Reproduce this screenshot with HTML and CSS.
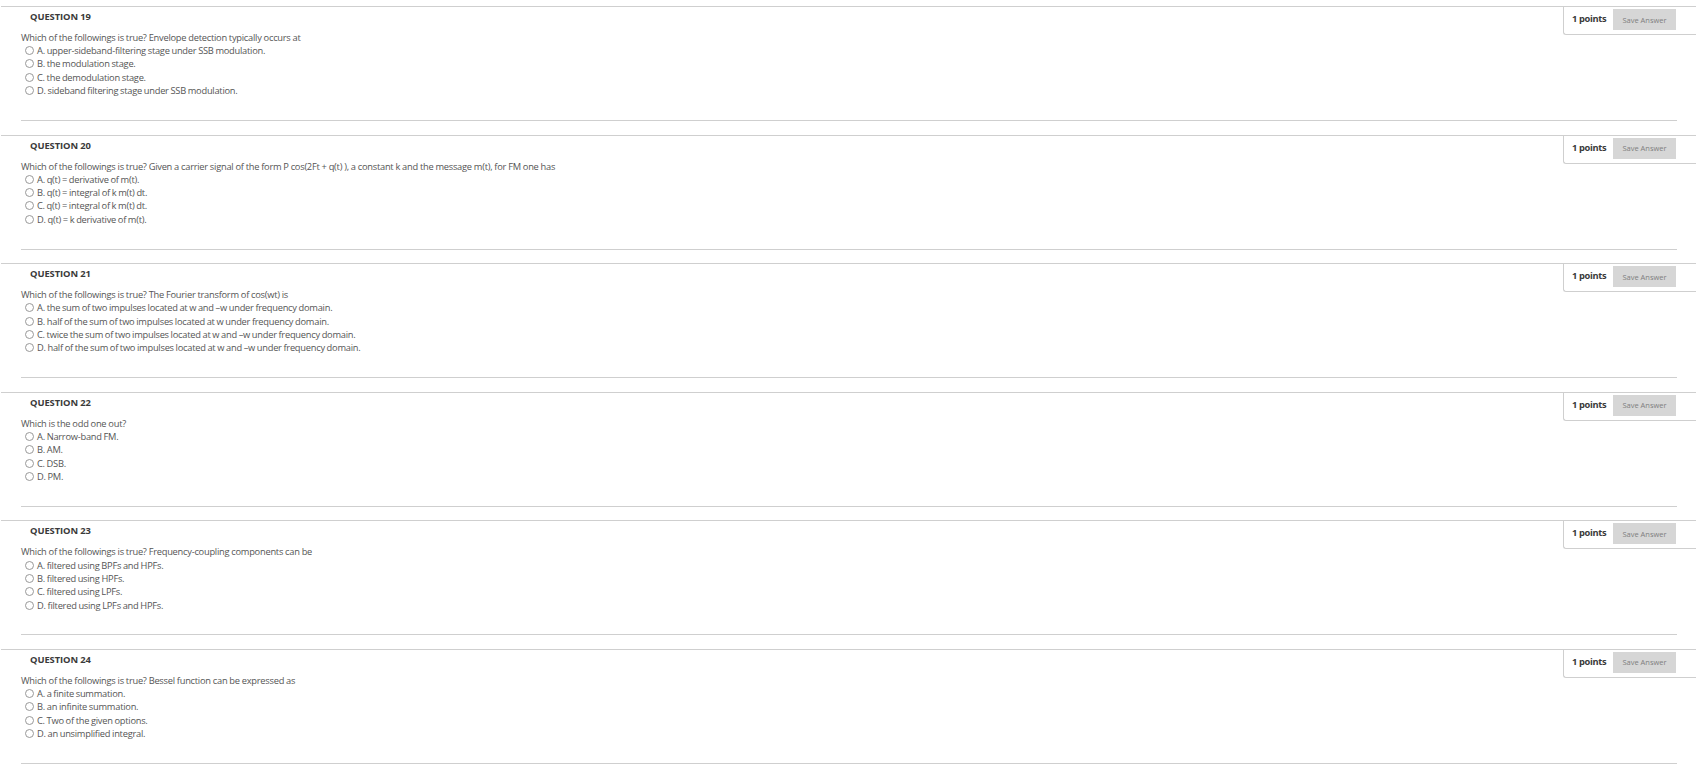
FILE: index.html
```html
<!DOCTYPE html>
<html lang="en">
<head>
<meta charset="utf-8">
<title>Questions</title>
<link rel="stylesheet" href="styles.css">
</head>
<body>
<main class="page">
<section class="question">
  <header class="q-head"><h3 class="q-title">QUESTION 19</h3><div class="q-points"><span class="points">1 points</span><button class="save" type="button">Save Answer</button></div></header>
  <div class="q-body"><p class="q-text">Which of the followings is true? Envelope detection typically occurs at</p>
  <ul class="options">
    <li class="option"><span class="radio"></span>A. upper-sideband-filtering stage under SSB modulation.</li>
    <li class="option"><span class="radio"></span>B. the modulation stage.</li>
    <li class="option"><span class="radio"></span>C. the demodulation stage.</li>
    <li class="option"><span class="radio"></span>D. sideband filtering stage under SSB modulation.</li>
  </ul></div>
</section>
<section class="question">
  <header class="q-head"><h3 class="q-title">QUESTION 20</h3><div class="q-points"><span class="points">1 points</span><button class="save" type="button">Save Answer</button></div></header>
  <div class="q-body"><p class="q-text">Which of the followings is true? Given a carrier signal of the form P cos(2Ft + q(t) ), a constant k and the message m(t), for FM one has</p>
  <ul class="options">
    <li class="option"><span class="radio"></span>A. q(t) = derivative of m(t).</li>
    <li class="option"><span class="radio"></span>B. q(t) = integral of k m(t) dt.</li>
    <li class="option"><span class="radio"></span>C. q(t) = integral of k m(t) dt.</li>
    <li class="option"><span class="radio"></span>D. q(t) = k derivative of m(t).</li>
  </ul></div>
</section>
<section class="question">
  <header class="q-head"><h3 class="q-title">QUESTION 21</h3><div class="q-points"><span class="points">1 points</span><button class="save" type="button">Save Answer</button></div></header>
  <div class="q-body"><p class="q-text">Which of the followings is true? The Fourier transform of cos(wt) is</p>
  <ul class="options">
    <li class="option"><span class="radio"></span>A. the sum of two impulses located at w and –w under frequency domain.</li>
    <li class="option"><span class="radio"></span>B. half of the sum of two impulses located at w under frequency domain.</li>
    <li class="option"><span class="radio"></span>C. twice the sum of two impulses located at w and –w under frequency domain.</li>
    <li class="option"><span class="radio"></span>D. half of the sum of two impulses located at w and –w under frequency domain.</li>
  </ul></div>
</section>
<section class="question">
  <header class="q-head"><h3 class="q-title">QUESTION 22</h3><div class="q-points"><span class="points">1 points</span><button class="save" type="button">Save Answer</button></div></header>
  <div class="q-body"><p class="q-text">Which is the odd one out?</p>
  <ul class="options">
    <li class="option"><span class="radio"></span>A. Narrow-band FM.</li>
    <li class="option"><span class="radio"></span>B. AM.</li>
    <li class="option"><span class="radio"></span>C. DSB.</li>
    <li class="option"><span class="radio"></span>D. PM.</li>
  </ul></div>
</section>
<section class="question">
  <header class="q-head"><h3 class="q-title">QUESTION 23</h3><div class="q-points"><span class="points">1 points</span><button class="save" type="button">Save Answer</button></div></header>
  <div class="q-body"><p class="q-text">Which of the followings is true? Frequency-coupling components can be</p>
  <ul class="options">
    <li class="option"><span class="radio"></span>A. filtered using BPFs and HPFs.</li>
    <li class="option"><span class="radio"></span>B. filtered using HPFs.</li>
    <li class="option"><span class="radio"></span>C. filtered using LPFs.</li>
    <li class="option"><span class="radio"></span>D. filtered using LPFs and HPFs.</li>
  </ul></div>
</section>
<section class="question">
  <header class="q-head"><h3 class="q-title">QUESTION 24</h3><div class="q-points"><span class="points">1 points</span><button class="save" type="button">Save Answer</button></div></header>
  <div class="q-body"><p class="q-text">Which of the followings is true? Bessel function can be expressed as</p>
  <ul class="options">
    <li class="option"><span class="radio"></span>A. a finite summation.</li>
    <li class="option"><span class="radio"></span>B. an infinite summation.</li>
    <li class="option"><span class="radio"></span>C. Two of the given options.</li>
    <li class="option"><span class="radio"></span>D. an unsimplified integral.</li>
  </ul></div>
</section>
</main>
</body>
</html>
```
FILE: styles.css
```css
html, body {
  margin: 0;
  padding: 0;
  background: #fff;
}
body {
  font-family: "Open Sans", sans-serif;
  font-size: 9.3px;
  letter-spacing: -0.25px;
  word-spacing: -0.15px;
  color: #555;
  overflow: hidden;
}
.page {
  padding: 6px 6px 0 1px;
}
.question {
  height: 128.6px;
  box-sizing: border-box;
}
.q-head {
  display: flex;
  justify-content: space-between;
  align-items: flex-start;
  border-top: 1px solid #cfcfcf;
  height: 24px;
  box-sizing: border-box;
}
.q-title {
  margin: 3px 0 0 29px;
  font-size: 9.4px;
  letter-spacing: -0.08px;
  line-height: 14px;
  font-weight: 700;
  color: #3a3a3a;
}
.q-points {
  display: flex;
  align-items: flex-start;
  gap: 6px;
  width: 133px;
  height: 28px;
  box-sizing: border-box;
  padding: 2px 20px 0 8px;
  border-left: 1px solid #cfcfcf;
  border-bottom: 1px solid #cfcfcf;
  border-bottom-left-radius: 3px;
  background: #fff;
}
.points {
  font-size: 9.3px;
  letter-spacing: -0.33px;
  font-weight: 700;
  line-height: 20px;
  color: #3a3a3a;
  width: 36px;
  white-space: nowrap;
}
.save {
  flex: none;
  width: 63px;
  height: 21px;
  margin: 0;
  border: 0;
  padding: 0;
  background: #d6d6d6;
  color: #7f7f7f;
  font-family: "Open Sans", sans-serif;
  font-size: 7.5px;
}
.q-body {
  margin: 0 19px 0 20px;
  height: 90px;
  box-sizing: content-box;
  border-bottom: 1px solid #cfcfcf;
}
.q-text {
  margin: 0;
  padding-top: 2px;
  line-height: 12px;
}
.options {
  list-style: none;
  margin: 0;
  padding: 0 0 0 4px;
}
.option {
  display: flex;
  align-items: center;
  height: 13.33px;
  white-space: nowrap;
  word-spacing: -0.35px;
}
.radio {
  width: 7px;
  height: 7px;
  border: 1px solid #999;
  border-radius: 50%;
  margin-right: 3px;
  background: #fff;
  flex: none;
}
```
